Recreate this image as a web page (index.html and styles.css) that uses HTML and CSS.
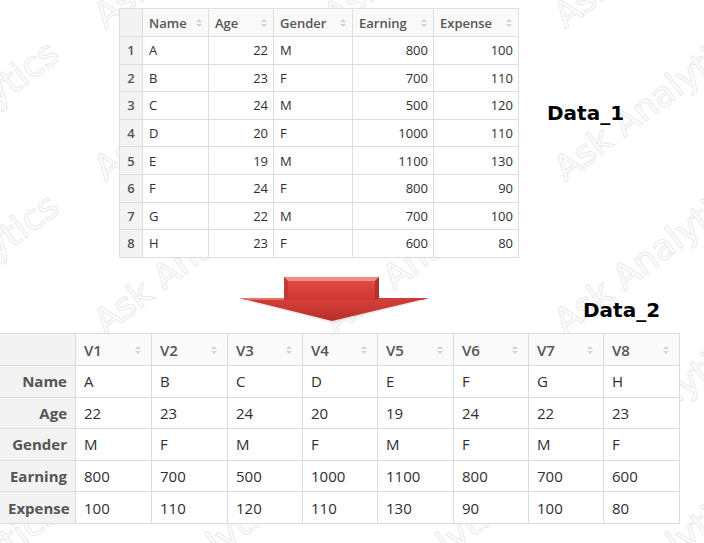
FILE: index.html
```html
<!DOCTYPE html>
<html>
<head>
<meta charset="utf-8">
<link rel="stylesheet" href="styles.css">
</head>
<body>
<div class="page">
  <div class="wm" aria-hidden="true">
    <span>Ask Analytics</span><span>Ask Analytics</span><span>Ask Analytics</span><span>Ask Analytics</span>
    <span>Ask Analytics</span><span>Ask Analytics</span><span>Ask Analytics</span><span>Ask Analytics</span>
    <span>Ask Analytics</span><span>Ask Analytics</span><span>Ask Analytics</span><span>Ask Analytics</span>
    <span>Ask Analytics</span><span>Ask Analytics</span><span>Ask Analytics</span><span>Ask Analytics</span>
    <span>Ask Analytics</span><span>Ask Analytics</span><span>Ask Analytics</span><span>Ask Analytics</span>
    <span>Ask Analytics</span><span>Ask Analytics</span><span>Ask Analytics</span><span>Ask Analytics</span>
  </div>
  <div class="content">
    <div class="top">
      <table class="t1">
        <colgroup><col class="w23"><col class="w66"><col class="w65"><col class="w79"><col class="w81"><col class="w85"></colgroup>
        <thead>
          <tr>
            <th class="idx"></th>
            <th><div class="hc"><span>Name</span><i class="sort"></i></div></th>
            <th><div class="hc"><span>Age</span><i class="sort"></i></div></th>
            <th><div class="hc"><span>Gender</span><i class="sort"></i></div></th>
            <th><div class="hc"><span>Earning</span><i class="sort"></i></div></th>
            <th><div class="hc"><span>Expense</span><i class="sort"></i></div></th>
          </tr>
        </thead>
        <tbody>
          <tr><td class="idx">1</td><td>A</td><td class="num">22</td><td>M</td><td class="num">800</td><td class="num">100</td></tr>
          <tr><td class="idx">2</td><td>B</td><td class="num">23</td><td>F</td><td class="num">700</td><td class="num">110</td></tr>
          <tr><td class="idx">3</td><td>C</td><td class="num">24</td><td>M</td><td class="num">500</td><td class="num">120</td></tr>
          <tr><td class="idx">4</td><td>D</td><td class="num">20</td><td>F</td><td class="num">1000</td><td class="num">110</td></tr>
          <tr><td class="idx">5</td><td>E</td><td class="num">19</td><td>M</td><td class="num">1100</td><td class="num">130</td></tr>
          <tr><td class="idx">6</td><td>F</td><td class="num">24</td><td>F</td><td class="num">800</td><td class="num">90</td></tr>
          <tr><td class="idx">7</td><td>G</td><td class="num">22</td><td>M</td><td class="num">700</td><td class="num">100</td></tr>
          <tr><td class="idx">8</td><td>H</td><td class="num">23</td><td>F</td><td class="num">600</td><td class="num">80</td></tr>
        </tbody>
      </table>
      <div class="label label1">Data_1</div>
    </div>
    <div class="mid">
      <svg class="arrow" width="190" height="48" viewBox="0 0 190 48">
        <defs>
          <linearGradient id="gs" x1="0" y1="0" x2="0" y2="1">
            <stop offset="0" stop-color="#e2564f"/>
            <stop offset="0.5" stop-color="#d9423c"/>
            <stop offset="1" stop-color="#cf3832"/>
          </linearGradient>
          <linearGradient id="gh" x1="0" y1="0" x2="0" y2="1">
            <stop offset="0" stop-color="#d5413b"/>
            <stop offset="1" stop-color="#b92d29"/>
          </linearGradient>
          <linearGradient id="gw" x1="0" y1="0" x2="1" y2="0">
            <stop offset="0" stop-color="#b8302c" stop-opacity="0.9"/>
            <stop offset="0.3" stop-color="#d3403a" stop-opacity="0"/>
            <stop offset="0.7" stop-color="#d3403a" stop-opacity="0"/>
            <stop offset="1" stop-color="#b8302c" stop-opacity="0.9"/>
          </linearGradient>
        </defs>
        <polygon points="3,24 187,24 93,47" fill="#000" fill-opacity="0.08"/>
        <polygon points="1,22 189,22 93,45" fill="url(#gh)"/>
        <polygon points="1,22 189,22 93,45" fill="url(#gw)"/>
        <polygon points="1,22 45,22 45,24 6,24" fill="#e8716a"/>
        <polygon points="189,22 140,22 140,24 184,24" fill="#c9403a"/>
        <rect x="45" y="1" width="95" height="23" fill="url(#gs)"/>
        <polygon points="45,1 140,1 136,5 49,5" fill="#ef8d86"/>
        <polygon points="45,1 49,5 49,24 45,22" fill="#c23a34"/>
        <polygon points="140,1 136,5 136,24 140,22" fill="#b0302b"/>
      </svg>
      <div class="label label2">Data_2</div>
    </div>
    <table class="t2">
      <colgroup><col class="w76"><col class="w76"><col class="w76"><col class="w75"><col class="w75"><col class="w76"><col class="w75"><col class="w75"><col class="w76"></colgroup>
      <thead>
        <tr>
          <th class="rn"></th>
          <th><div class="hc"><span>V1</span><i class="sort"></i></div></th>
          <th><div class="hc"><span>V2</span><i class="sort"></i></div></th>
          <th><div class="hc"><span>V3</span><i class="sort"></i></div></th>
          <th><div class="hc"><span>V4</span><i class="sort"></i></div></th>
          <th><div class="hc"><span>V5</span><i class="sort"></i></div></th>
          <th><div class="hc"><span>V6</span><i class="sort"></i></div></th>
          <th><div class="hc"><span>V7</span><i class="sort"></i></div></th>
          <th><div class="hc"><span>V8</span><i class="sort"></i></div></th>
        </tr>
      </thead>
      <tbody>
        <tr><td class="rn">Name</td><td>A</td><td>B</td><td>C</td><td>D</td><td>E</td><td>F</td><td>G</td><td>H</td></tr>
        <tr><td class="rn">Age</td><td>22</td><td>23</td><td>24</td><td>20</td><td>19</td><td>24</td><td>22</td><td>23</td></tr>
        <tr><td class="rn">Gender</td><td>M</td><td>F</td><td>M</td><td>F</td><td>M</td><td>F</td><td>M</td><td>F</td></tr>
        <tr><td class="rn">Earning</td><td>800</td><td>700</td><td>500</td><td>1000</td><td>1100</td><td>800</td><td>700</td><td>600</td></tr>
        <tr><td class="rn">Expense</td><td>100</td><td>110</td><td>120</td><td>110</td><td>130</td><td>90</td><td>100</td><td>80</td></tr>
      </tbody>
    </table>
  </div>
</div>
</body>
</html>
```

FILE: styles.css
```css
* { box-sizing: border-box; }
html, body { margin: 0; background: #fff; }

.page {
  position: relative;
  width: 704px;
  height: 543px;
  overflow: hidden;
  font-family: "Open Sans", "DejaVu Sans", sans-serif;
  color: #333;
}

/* watermark layer */
.wm {
  position: absolute;
  left: -124px;
  top: -153px;
  display: grid;
  grid-template-columns: repeat(4, 230px);
  grid-auto-rows: 153px;
  z-index: 0;
  pointer-events: none;
}
.wm span {
  font: 35px/35px "DejaVu Sans", sans-serif;
  color: transparent;
  -webkit-text-stroke: 1px #e9e9e9;
  white-space: nowrap;
  transform-origin: 0 30px;
  transform: rotate(-37deg);
}
.wm span:nth-child(4n+1) { margin-top: 16px; }

.content { position: relative; z-index: 1; }

.top {
  height: 257px;
  display: flex;
  align-items: flex-start;
  padding: 8px 0 0 119px;
}

/* shared header cell */
.hc {
  display: flex;
  align-items: center;
  justify-content: space-between;
}
.sort {
  display: flex;
  flex-direction: column;
  gap: 2px;
  margin-right: 1px;
}
.sort::before, .sort::after {
  content: "";
  width: 0;
  height: 0;
  border-left: 3px solid transparent;
  border-right: 3px solid transparent;
}
.sort::before { border-bottom: 3px solid #d2d2d2; }
.sort::after { border-top: 3px solid #d2d2d2; }

/* top table */
.t1 {
  border-collapse: collapse;
  table-layout: fixed;
  width: 400px;
  font-size: 13px;
  background: #fff;
}
.t1 th, .t1 td {
  border: 1px solid #dedede;
  padding: 0 5px 0 6px;
  white-space: nowrap;
}
.t1 th {
  height: 28px;
  background: #fafafa;
  color: #555;
  font-weight: 600;
  text-align: left;
}
.t1 td {
  height: 27.6px;
  font-weight: 500;
  color: #2f2f2f;
}
.t1 .idx {
  background: #f3f3f3;
  color: #555;
  text-align: center;
  padding: 0;
  font-weight: 600;
}
.t1 .num { text-align: right; }

.w23 { width: 23px; }
.w66 { width: 66px; }
.w65 { width: 65px; }
.w79 { width: 79px; }
.w81 { width: 81px; }
.w85 { width: 85px; }
.w75 { width: 75px; }
.w76 { width: 76px; }

.label {
  font: 700 20px/24px "DejaVu Sans", sans-serif;
  color: #000;
}
.label1 { margin: 93px 0 0 28px; }

.mid {
  height: 76px;
  display: flex;
  align-items: flex-start;
}
.arrow { margin: 19px 0 0 239px; flex: none; }
.label2 { margin: 41px 0 0 154px; }

/* bottom table */
.t2 {
  border-collapse: collapse;
  table-layout: fixed;
  width: 681px;
  margin-left: -1px;
  font-size: 15px;
  background: #fff;
}
.t2 th, .t2 td {
  border: 1px solid #dcdcdc;
  padding: 0 8px;
  white-space: nowrap;
}
.t2 th {
  height: 32px;
  background: #fafafa;
  color: #555;
  font-weight: 600;
  text-align: left;
  padding-right: 9px;
}
.t2 td {
  height: 31.6px;
  font-weight: 500;
  color: #2f2f2f;
}
.t2 .rn {
  background: #f3f3f3;
  color: #555;
  font-weight: 700;
  text-align: right;
}
```
